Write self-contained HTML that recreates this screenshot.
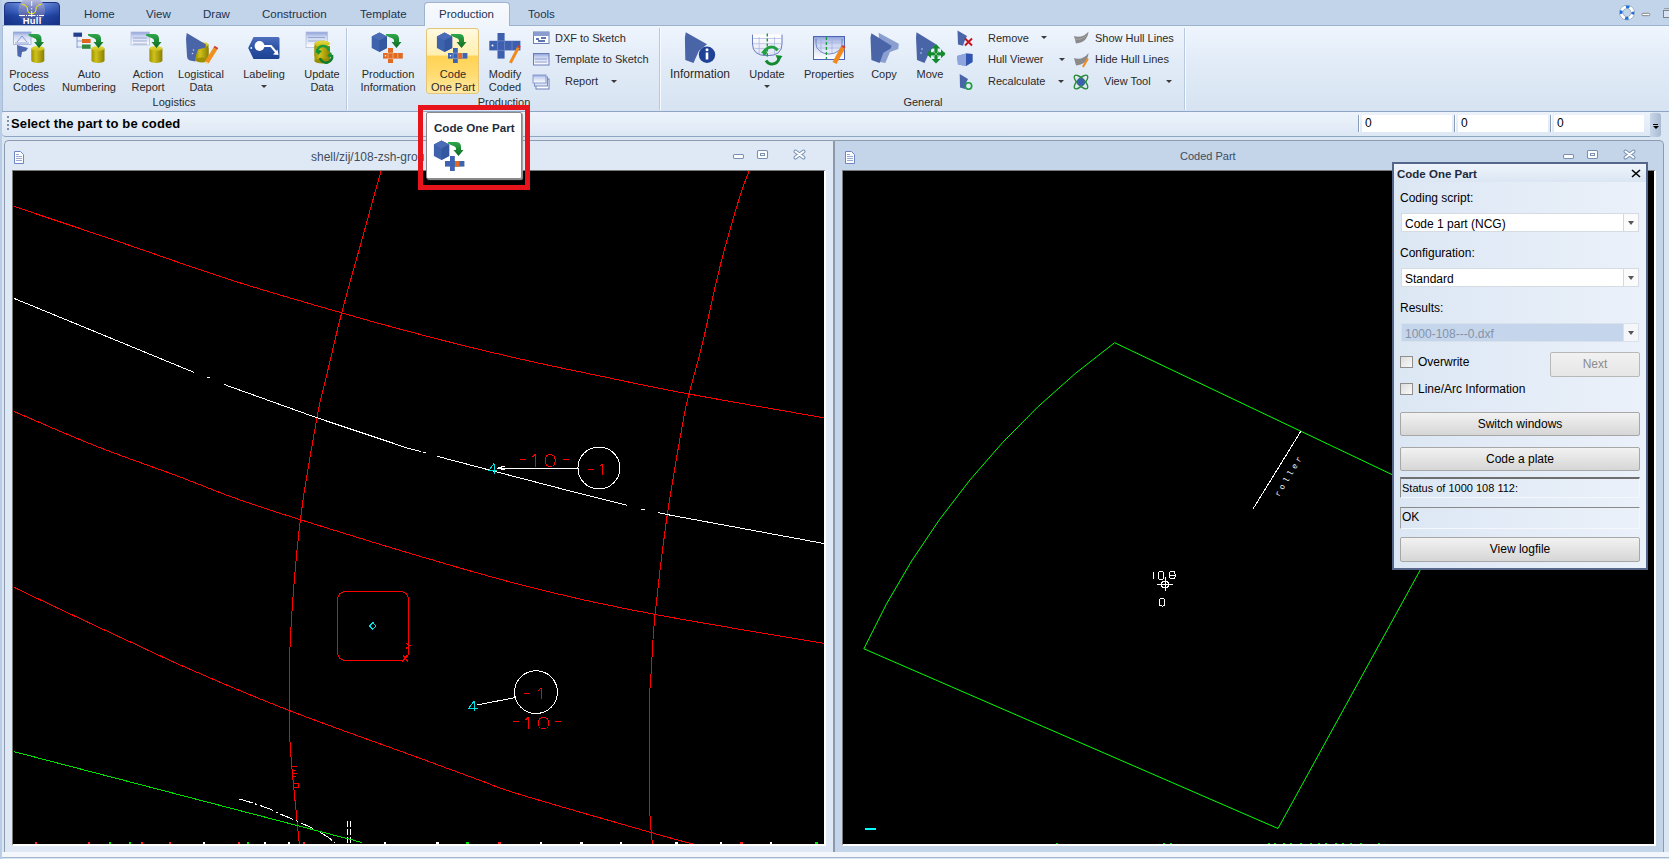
<!DOCTYPE html>
<html><head><meta charset="utf-8">
<style>
*{box-sizing:border-box;margin:0;padding:0}
html,body{width:1669px;height:859px;overflow:hidden}
body{position:relative;background:#c3d5eb;font-family:"Liberation Sans",sans-serif;font-size:11px;color:#1e395b}
.a{position:absolute}
.t{position:absolute;white-space:nowrap;line-height:13px}
#tabbar{left:0;top:0;width:1669px;height:26px;background:#c2d4ea}
.tab{position:absolute;top:8px;font-size:11.5px;color:#20334f;line-height:13px}
#ribbon{left:2px;top:25px;width:1667px;height:87px;border-top:1px solid #9cb2cd;border-left:1px solid #a9bcd6;border-bottom:1px solid #8ea6c3;background:linear-gradient(#eff5fd 0%,#e2ecf8 40%,#d7e3f2 100%)}
.lbl{position:absolute;font-size:11px;color:#2a2a2a;text-align:center;line-height:13px;white-space:nowrap}
.grp{position:absolute;top:96px;font-size:11px;color:#2a2a2a;line-height:13px;white-space:nowrap}
.sep{position:absolute;top:28px;width:2px;height:82px;border-left:1px solid #b9c9dd;border-right:1px solid #f7fafe}
.sm{position:absolute;font-size:11px;color:#2a2a2a;line-height:13px;white-space:nowrap}
.dd{position:absolute;width:0;height:0;border-left:3px solid transparent;border-right:3px solid transparent;border-top:3px solid #3a3a3a}
#cmd{left:2px;top:112px;width:1667px;height:25px;background:linear-gradient(#edf3fb,#dde8f5);border-bottom:1px solid #8ea6c3}
.fld{position:absolute;top:115px;height:17px;background:#fff;font-size:12px;color:#000;line-height:17px;padding-left:7px}
.win{position:absolute;top:140px;height:713px;border:1px solid #8c9bb0;border-bottom:none;border-radius:5px 5px 0 0}
.canvas{position:absolute;background:#000;border-top:1px solid #7a7a7a;border-left:1px solid #7a7a7a;border-right:2px solid #fff;border-bottom:2px solid #fff;overflow:hidden}
.wtitle{position:absolute;top:9px;font-size:11.5px;color:#3e4c60;white-space:nowrap}
.btn{position:absolute;height:24px;border:1px solid #a7a7a7;border-radius:2px;background:linear-gradient(#f2f2f2,#e4e4e4 50%,#d6d6d6);font-size:12px;color:#000;text-align:center;line-height:22px}
.dl{position:absolute;font-size:12px;color:#000;white-space:nowrap;line-height:14px}
.combo{position:absolute;height:19px;background:#fff;border:1px solid #d5dbe3;font-size:12px;color:#000;line-height:20px;padding-left:3px}
.combo .arr{position:absolute;right:0;top:0;width:15px;height:17px;border-left:1px solid #d8d8d8;background:#fbfbfb}
.combo .arr:after{content:"";position:absolute;left:4px;top:7px;border-left:3px solid transparent;border-right:3px solid transparent;border-top:4px solid #555}
.chk{position:absolute;width:13px;height:12px;border:1px solid #8f8f8f;background:linear-gradient(135deg,#dcdcdc,#fafafa)}
</style></head><body>

<!-- TAB BAR -->
<div id="tabbar" class="a"></div>
<div class="a" style="left:4px;top:2px;width:56px;height:24px;border-radius:4px 4px 0 0;background:linear-gradient(90deg,rgba(10,30,110,0.35),rgba(255,255,255,0) 30%,rgba(255,255,255,0) 70%,rgba(10,30,110,0.35)),linear-gradient(#6a8ee0,#3b62c4 40%,#2548a6 60%,#1b3a90);border:1px solid #1c3483"></div>
<svg class="a" style="left:4px;top:0" width="56" height="26" viewBox="4 0 56 26">
<defs><linearGradient id="hc" x1="0" x2="0" y1="0" y2="1"><stop offset="0" stop-color="#c8cbe4"/><stop offset="0.45" stop-color="#7480bd"/><stop offset="1" stop-color="#2c3f96"/></linearGradient></defs>
<circle cx="31.7" cy="10.5" r="13.3" fill="url(#hc)"/>
<path d="M22.3,4.3 L25,5.2 L27,7.2 L27.8,11 Q28.5,13.6 30.5,13.6 L33,13.6 Q35,13.6 35.6,11 L36.4,7.2 L38.4,5.2 L41,4.3" stroke="#f6f000" stroke-width="1" fill="none"/>
<path d="M31.7,1 v5 M31.7,8 v1.5 M31.7,11 v6" stroke="#fff" stroke-width="0.9"/>
<path d="M19,15.5 h6 M26,15.5 h1 M28,15.5 h7.5 M37,15.5 h1 M39,15.5 h5" stroke="#fff" stroke-width="1"/>
<text x="32.2" y="23.8" text-anchor="middle" font-family="Liberation Sans" font-weight="bold" font-size="9.4" fill="#fff" letter-spacing="0.3">Hull</text>
</svg>
<div class="t" style="left:84px" ></div>
<div class="tab" style="left:84px">Home</div>
<div class="tab" style="left:146px">View</div>
<div class="tab" style="left:203px">Draw</div>
<div class="tab" style="left:262px">Construction</div>
<div class="tab" style="left:360px">Template</div>
<div class="a" style="left:424px;top:2px;width:86px;height:25px;border:1px solid #9fb3cd;border-bottom:none;border-radius:4px 4px 0 0;background:linear-gradient(#f7fafe,#eff5fc)"></div>
<div class="tab" style="left:439px">Production</div>
<div class="tab" style="left:528px">Tools</div>

<svg class="a" style="left:1612px;top:0" width="57" height="26" viewBox="1612 0 57 26">
<circle cx="1627" cy="12.6" r="7.3" fill="none" stroke="#7a8a90" stroke-width="0.8"/>
<circle cx="1627" cy="12.6" r="4.3" fill="none" stroke="#7a8a90" stroke-width="0.8"/>
<circle cx="1627" cy="12.6" r="5.8" fill="none" stroke="#fff" stroke-width="2.8"/>
<circle cx="1627" cy="12.6" r="5.8" fill="none" stroke="#1f6fe0" stroke-width="2.8" stroke-dasharray="3.6,5.51" stroke-dashoffset="1.8"/>
<rect x="1642" y="13.3" width="7.8" height="2.4" rx="1" fill="#fff" stroke="#777" stroke-width="0.9"/>
<rect x="1663.5" y="10.5" width="8" height="7" fill="#d8e4f4" stroke="#777" stroke-width="0.9"/>
<path d="M1664,8.5 h6" stroke="#777" stroke-width="0.6"/>
</svg>
<!-- RIBBON -->
<div id="ribbon" class="a"></div>
<div class="a" style="left:425px;top:25px;width:84px;height:2px;background:#f0f5fc"></div>
<div class="sep" style="left:346px"></div>
<div class="sep" style="left:659px"></div>
<div class="sep" style="left:1184px"></div>

<!-- ribbon highlight for Code One Part -->
<div class="a" style="left:426px;top:28px;width:53px;height:66px;border:1px solid #e3c67b;border-radius:3px;background:linear-gradient(#fff9df 0%,#ffefb0 40%,#ffd354 43%,#ffdb6e 70%,#ffe9a6 100%)"></div>
<div class="lbl" style="left:-21px;top:68px;width:100px">Process<br>Codes</div>
<div class="lbl" style="left:39px;top:68px;width:100px">Auto<br>Numbering</div>
<div class="lbl" style="left:98px;top:68px;width:100px">Action<br>Report</div>
<div class="lbl" style="left:151px;top:68px;width:100px">Logistical<br>Data</div>
<div class="lbl" style="left:214px;top:68px;width:100px">Labeling</div>
<div class="dd" style="left:261px;top:85px"></div>
<div class="lbl" style="left:272px;top:68px;width:100px">Update<br>Data</div>
<div class="grp" style="left:124px;width:100px;text-align:center">Logistics</div>
<div class="lbl" style="left:338px;top:68px;width:100px">Production<br>Information</div>
<div class="lbl" style="left:403px;top:68px;width:100px">Code<br>One Part</div>
<div class="lbl" style="left:455px;top:68px;width:100px">Modify<br>Coded</div>
<div class="grp" style="left:454px;width:100px;text-align:center">Production</div>
<div class="sm" style="left:555px;top:32px">DXF to Sketch</div>
<div class="sm" style="left:555px;top:53px">Template to Sketch</div>
<div class="sm" style="left:565px;top:75px">Report</div>
<div class="dd" style="left:611px;top:80px"></div>
<div class="lbl" style="left:650px;top:68px;width:100px;font-size:12px">Information</div>
<div class="lbl" style="left:717px;top:68px;width:100px">Update</div>
<div class="dd" style="left:764px;top:85px"></div>
<div class="lbl" style="left:779px;top:68px;width:100px">Properties</div>
<div class="lbl" style="left:834px;top:68px;width:100px">Copy</div>
<div class="lbl" style="left:880px;top:68px;width:100px">Move</div>
<div class="grp" style="left:873px;width:100px;text-align:center">General</div>
<div class="sm" style="left:988px;top:32px">Remove</div>
<div class="dd" style="left:1041px;top:36px"></div>
<div class="sm" style="left:988px;top:53px">Hull Viewer</div>
<div class="dd" style="left:1059px;top:58px"></div>
<div class="sm" style="left:988px;top:75px">Recalculate</div>
<div class="dd" style="left:1058px;top:80px"></div>
<div class="sm" style="left:1095px;top:32px">Show Hull Lines</div>
<div class="sm" style="left:1095px;top:53px">Hide Hull Lines</div>
<div class="sm" style="left:1104px;top:75px">View Tool</div>
<div class="dd" style="left:1166px;top:80px"></div>


<svg class="a" style="left:0;top:26px" width="1669" height="85" viewBox="0 26 1669 85">
<defs>
<linearGradient id="cyl" x1="0" x2="1" y1="0" y2="0"><stop offset="0" stop-color="#9c9000"/><stop offset="0.35" stop-color="#cfc21c"/><stop offset="1" stop-color="#8a7f00"/></linearGradient>
<linearGradient id="cyltop" x1="0" x2="0" y1="0" y2="1"><stop offset="0" stop-color="#e4da40"/><stop offset="1" stop-color="#c8bb18"/></linearGradient>
<linearGradient id="grn" x1="0" x2="0" y1="0" y2="1"><stop offset="0" stop-color="#2ea84a"/><stop offset="1" stop-color="#0c6a22"/></linearGradient>
<linearGradient id="doc" x1="0" x2="0" y1="0" y2="1"><stop offset="0" stop-color="#8c9fd8"/><stop offset="0.3" stop-color="#c9d3f0"/><stop offset="1" stop-color="#ffffff"/></linearGradient>
<linearGradient id="plate" x1="0" x2="1" y1="0" y2="1"><stop offset="0" stop-color="#5a74b8"/><stop offset="1" stop-color="#3f5aa0"/></linearGradient>
<g id="arrowG"><path d="M0,0 L8,0 Q13,0 13,5 L13,8 L15.5,8 L10.5,14 L5.5,8 L8,8 L8,6.5 Q8,4.5 5.5,4 Q3,3.3 0,1.5 Z" fill="url(#grn)"/></g>
<g id="cylG"><path d="M0,3 L0,15 A6.5,2.5 0 0 0 13,15 L13,3 Z" fill="url(#cyl)"/><ellipse cx="6.5" cy="3" rx="6.5" ry="2.6" fill="url(#cyltop)"/></g>
</defs>
<!-- Process Codes -->
<rect x="13.5" y="32" width="17.5" height="12.5" fill="url(#doc)" stroke="#9aaad8" stroke-width="0.8"/>
<path d="M17,42 L22,36 L27,42 M15,43 h14" stroke="#6f86c8" fill="none" stroke-width="0.8"/>
<path d="M17,45 L28,48 L26,51 L22,52 L21,57.5 L17.5,56 Z" fill="#4c67ad"/>
<use href="#cylG" x="31.3" y="45.5"/>
<use href="#arrowG" x="28.5" y="34"/>
<!-- Auto Numbering -->
<rect x="73.4" y="32.6" width="8.6" height="4.2" fill="#233f8e"/>
<path d="M77,37 v11 M77,41 h5 M77,47 h5" stroke="#7b8fc8" fill="none" stroke-width="0.8"/>
<rect x="82" y="39" width="8.6" height="4" fill="#e0661e"/>
<rect x="82" y="44.5" width="8.6" height="4.3" fill="#2f8a3c"/>
<use href="#cylG" x="91.5" y="45.5"/>
<use href="#arrowG" x="88" y="34"/>
<!-- Action Report -->
<rect x="131" y="32" width="18.4" height="13" fill="url(#doc)" stroke="#b5c0e0" stroke-width="0.8"/>
<path d="M133,38 h14 M133,41 h14 M133,44 h14" stroke="#8899cc" stroke-width="0.8"/>
<use href="#cylG" x="149.4" y="45.5"/>
<use href="#arrowG" x="146" y="34"/>
<!-- Logistical Data -->
<use href="#cylG" x="195.5" y="41.5"/>
<rect x="195.5" y="48" width="13" height="12" fill="url(#cyl)"/>
<ellipse cx="202" cy="60" rx="6.5" ry="2.6" fill="#9a8f00"/>
<path d="M186.7,33 L206,44.6 L205.4,47.6 L198,49.5 L196,55 L195.5,61.6 L190,60.5 Q187,59.5 187,56 L186,39 Z" fill="#4a64a8"/>
<circle cx="193.5" cy="50" r="0.8" fill="#c8d2ee"/><circle cx="192.5" cy="53.5" r="0.8" fill="#c8d2ee"/>
<path d="M205,61 L213.5,47.5 L217.2,49.8 L208.7,63.3 Z" fill="#f0901e"/>
<path d="M213.5,47.5 L214.6,45.8 L218.3,48.1 L217.2,49.8Z" fill="#d04030"/>
<path d="M205,61 L208.7,63.3 L205.8,64.5Z" fill="#f2d6a0"/>
<!-- Labeling -->
<defs><linearGradient id="tag" x1="0" x2="0" y1="0" y2="1"><stop offset="0" stop-color="#4f6fbd"/><stop offset="0.5" stop-color="#2c52a6"/><stop offset="1" stop-color="#1d4193"/></linearGradient></defs>
<path d="M253.5,37 L278,37 Q279.5,37 279.5,38.5 L279.5,57.5 Q279.5,59 278,59 L253.5,59 L248.2,48 Z" fill="url(#tag)"/>
<circle cx="259.5" cy="46" r="4.9" fill="#fff"/>
<circle cx="251.3" cy="48" r="0.9" fill="#fff"/>
<path d="M264,46 L271,46 L276,52" stroke="#fff" stroke-width="2" fill="none"/>
<path d="M273,54.5 L278.5,55 L277.5,49.5 Z" fill="#fff"/>
<!-- Update Data -->
<rect x="306" y="32" width="21.5" height="15.6" fill="url(#doc)" stroke="#b5c0e0" stroke-width="0.8"/>
<path d="M308,37.5 h17 M308,41 h17" stroke="#8899cc" stroke-width="0.8"/>
<use href="#cylG" x="314.5" y="40.6" transform="translate(0,0)"/>
<rect x="314.5" y="46" width="15.5" height="15" fill="url(#cyl)"/>
<ellipse cx="322.2" cy="61" rx="7.7" ry="2.5" fill="#9a8f00"/>
<ellipse cx="322.3" cy="43.6" rx="7.7" ry="3" fill="url(#cyltop)"/>
<path d="M317,53 A6,6 0 0 1 329,51" stroke="#1d9a3a" stroke-width="2.5" fill="none"/>
<path d="M332,55 A6,6 0 0 1 320,58" stroke="#0f7a2a" stroke-width="2.5" fill="none"/>
<path d="M316,49 l2,6 l4,-4 z M333,58 l-2,-6 l-4,4z" fill="#159030"/>
<!-- Production Information -->
<path d="M379.4,32.6 L387,36.5 L387,48 L379.4,52 L371.7,48 L371.7,36.5 Z" fill="#3f62ad"/>
<path d="M379.4,32.6 L387,36.5 L379.4,40.5 L371.7,36.5 Z" fill="#4a6bb5"/>
<path d="M379.4,40.5 L387,36.5 L387,48 L379.4,52 Z" fill="#3357a0"/>
<use href="#arrowG" x="386" y="34"/>
<g fill="#e06a22"><rect x="388" y="48" width="5" height="15"/><rect x="383" y="53" width="19.8" height="5.6"/></g>
<path d="M388,53 v5.6 M393,53 v5.6 M397.8,53 v5.6 M388,53 h5 M388,58.6 h5" stroke="#f7c3a0" stroke-width="0.6"/><circle cx="385.5" cy="55.8" r="0.8" fill="#fff"/>
<!-- Code One Part -->
<path d="M444.5,32.6 L452.2,36.5 L452.2,48 L444.5,52 L436.9,48 L436.9,36.5 Z" fill="#3f62ad"/>
<path d="M444.5,32.6 L452.2,36.5 L444.5,40.5 L436.9,36.5 Z" fill="#4a6bb5"/>
<path d="M444.5,40.5 L452.2,36.5 L452.2,48 L444.5,52 Z" fill="#3357a0"/>
<use href="#arrowG" x="451" y="34"/>
<g fill="#3e63b0"><rect x="453" y="48" width="4.8" height="15"/><rect x="448" y="53" width="19.4" height="5.6"/></g>
<rect x="458" y="53" width="4.5" height="5.6" fill="#e06a22"/>
<path d="M453,53 v5.6 M457.8,53 v5.6 M462.5,53 v5.6 M453,53 h4.8 M453,58.6 h4.8" stroke="#9fb4e0" stroke-width="0.6"/><circle cx="450.5" cy="55.8" r="0.8" fill="#fff"/>
<!-- Modify Coded -->
<g fill="#3e5fae"><rect x="497.5" y="33" width="7.1" height="25.6"/><rect x="489.3" y="40.8" width="31.1" height="9.6"/></g>
<path d="M497.5,40.8 v9.6 M504.6,40.8 v9.6 M512,40.8 v9.6 M497.5,50.4 h7.1 M497.5,40.8 h7.1" stroke="#7f99d0" stroke-width="0.6"/>
<circle cx="492.5" cy="45.5" r="1" fill="#fff"/>
<path d="M509,62.2 L517,47 L519.7,48.3 L511.7,63.5 Z" fill="#f08a1c"/>
<path d="M517,47 L518,45 L520.7,46.3 L519.7,48.3Z" fill="#d0402a"/>
<!-- DXF to Sketch small -->
<rect x="533.5" y="32" width="15.5" height="11.5" fill="#fff" stroke="#6a7fb8" stroke-width="1"/>
<rect x="533.5" y="32" width="15.5" height="4" fill="#8b9cd0"/>
<path d="M536,39 h3 M541,38 h5 M538,41 h7" stroke="#2a4a9a" stroke-width="1.3"/>
<rect x="533.5" y="53.5" width="15.5" height="11.5" fill="url(#doc)" stroke="#6a7fb8" stroke-width="1"/>
<path d="M535,59 h12 M535,62 h12" stroke="#7a8fc8" stroke-width="0.8"/>
<rect x="536" y="79" width="13" height="10" fill="#fff" stroke="#6a7fb8" stroke-width="1"/>
<rect x="534.5" y="77" width="13" height="9" fill="#dde3f3" stroke="#7a8fc8" stroke-width="1"/>
<rect x="533" y="75" width="13" height="8" fill="url(#doc)" stroke="#8a9cd0" stroke-width="1"/>
<!-- Information -->
<path d="M685.8,32.2 L707,44.2 L698.8,51 L693.5,62.9 L685.3,60 L684.9,37.5 Z" fill="#4a64a8"/>
<circle cx="707" cy="54.8" r="8.2" fill="#1f4196"/>
<rect x="705.7" y="52.5" width="2.6" height="7" fill="#fff"/><circle cx="707" cy="49.8" r="1.5" fill="#fff"/>
<!-- Update (General) -->
<defs><linearGradient id="ug" x1="0" x2="0" y1="0" y2="1"><stop offset="0" stop-color="#ffffff"/><stop offset="1" stop-color="#dfe4f6"/></linearGradient></defs>
<path d="M752.5,34.6 L752.5,44 Q752.5,55.7 767.3,55.7 Q782,55.7 782,44 L782,34.6" fill="url(#ug)" stroke="#5a6cb4" stroke-width="0.9"/>
<path d="M752.8,38.5 h29 M753,43.7 h28.6 M754.5,48.5 h25.5 M759.2,37 v17 M774.5,37 v17" stroke="#a9b5e0" stroke-width="0.7" fill="none"/>
<path d="M767.3,33.5 v23" stroke="#1a9a3a" stroke-width="1.4" stroke-dasharray="3,2"/>
<path d="M764.5,55 A7,7 0 0 1 777.5,50.5" stroke="#22a040" stroke-width="3" fill="none"/>
<path d="M779,56 A7,7 0 0 1 766,60.5" stroke="#138a30" stroke-width="3" fill="none"/>
<path d="M761,53 L764.5,48.5 L768,54 Z" fill="#22a040"/>
<path d="M782.5,56 L778.5,61.5 L775.5,55 Z" fill="#138a30"/>
<!-- Properties -->
<rect x="813.5" y="36.5" width="31" height="23" fill="url(#doc)" stroke="#4a64b8" stroke-width="1"/>
<path d="M816,39 L816,44 A13,10 0 0 0 842,44 L842,39" fill="none" stroke="#5c72b8" stroke-width="0.8"/>
<path d="M816,43 h26 M816,48 h26 M821,40 v13 M832,40 v13" stroke="#9aaade" stroke-width="0.6"/>
<path d="M826.4,37 v22" stroke="#1a9a3a" stroke-width="1.3" stroke-dasharray="3,2"/>
<path d="M832.5,62 L841,46.5 L845,48.8 L836.5,64 Z" fill="#f08a1c"/>
<path d="M841.5,47 L842.7,45 L845.5,46.6 L844.5,48.6Z" fill="#d0402a"/>
<!-- Copy -->
<path d="M878.6,32.7 L898.8,43.7 L898.3,49 L890,51.9 L885.3,62.9 L880,62 L879,38 Z" fill="#8a9fd0"/>
<path d="M871.4,33.2 L891.6,45.7 L890.6,48.5 L883.4,52.8 L879.6,62.9 L871.4,60 L870.5,37.5 Z" fill="#4a64a8"/>
<!-- Move -->
<path d="M916.5,32.2 L936,44.2 L930,51 L924.5,62.9 L917,60 L916,37.5 Z" fill="#4a64a8"/>
<circle cx="922" cy="49" r="0.8" fill="#c8d2ee"/><circle cx="921" cy="53" r="0.8" fill="#c8d2ee"/>
<path d="M936,45.5 v16.5 M928,53.8 h16.5" stroke="#148a2e" stroke-width="3.2"/>
<path d="M936,44 l4.5,4.5 h-9 z M936,63.5 l4.5,-4.5 h-9 z M926.5,53.8 l4.5,-4.5 v9 z M945.5,53.8 l-4.5,-4.5 v9 z" fill="#148a2e"/>
<path d="M933,51 l6,6 M939,51 l-6,6" stroke="#7fd090" stroke-width="0.8"/>
<!-- Remove small -->
<path d="M957.5,30.5 L967,36 L965,40 L963,45.7 L958,44.5 Z" fill="#4a64a8"/>
<path d="M965,38.5 L972,45.5 M972,38.5 L965,45.5" stroke="#c8141e" stroke-width="2"/>
<!-- Hull Viewer small -->
<path d="M957,56 L966,53.5 L972.5,54 L972.5,62 L966,66 L958,64.5 Z" fill="#6f8ad0"/>
<path d="M966,53.5 L972.5,54 L972.5,62 L966,66 Z" fill="#2f55b0"/>
<path d="M957,56 L966,53.5 L966,66 L958,64.5Z" fill="#8ea4dc"/>
<!-- Recalculate small -->
<path d="M959.7,74 L968,79 L966,83 L965,89 L960,87.5 Z" fill="#4a64a8"/>
<circle cx="968.5" cy="86" r="3.2" stroke="#1a9a3a" stroke-width="1.6" fill="none"/>
<!-- Show Hull Lines -->
<path d="M1074,36 C1079,38 1085,36 1088.5,31.5 C1088,38 1084,43 1076,43.5 Z" fill="#8a8a8a"/>
<path d="M1075,39 C1080,40 1083,38 1086,36" stroke="#b4b4b4" stroke-width="0.7" fill="none"/>
<!-- Hide Hull Lines -->
<path d="M1074,58 C1079,60 1085,58 1088.5,53 C1088,60 1084,65 1076,65.5 Z" fill="#8a8a8a"/>
<path d="M1082,66.5 L1087,58 L1088.8,59 L1083.8,67.5 Z" fill="#f08a1c"/>
<!-- View Tool -->
<ellipse cx="1081" cy="82" rx="9" ry="3.5" transform="rotate(45 1081 82)" stroke="#2a8a3a" stroke-width="1.4" fill="none"/>
<ellipse cx="1081" cy="82" rx="9" ry="3.5" transform="rotate(-45 1081 82)" stroke="#2a8a3a" stroke-width="1.4" fill="none"/>
<circle cx="1081" cy="82" r="3.8" fill="#3a5fae"/>
</svg>
<!-- COMMAND BAR -->
<div class="a" style="left:0;top:112px;width:1669px;height:747px;background:#dbe6f3"></div>
<div class="a" style="left:0;top:0;width:2px;height:859px;background:#b9cde6"></div>
<div id="cmd" class="a" style="border-radius:4px 0 0 4px;width:1650px"></div>
<div class="a" style="left:7px;top:116px;width:2px;height:14px;background:repeating-linear-gradient(#7b8fb0 0 2px,transparent 2px 4px)"></div>
<div class="a" style="left:11px;top:117px;font-size:13px;letter-spacing:0.12px;font-weight:bold;color:#000;line-height:14px;white-space:nowrap">Select the part to be coded</div>
<div class="a" style="left:1358px;top:115px;width:2px;height:17px;border-left:1px solid #8a9cb6;border-right:1px solid #fff"></div>
<div class="a" style="left:1454px;top:115px;width:2px;height:17px;border-left:1px solid #8a9cb6;border-right:1px solid #fff"></div>
<div class="a" style="left:1550px;top:115px;width:2px;height:17px;border-left:1px solid #8a9cb6;border-right:1px solid #fff"></div>
<div class="fld" style="left:1362px;width:90px;padding-left:3px">0</div>
<div class="fld" style="left:1458px;width:90px;padding-left:3px">0</div>
<div class="fld" style="left:1554px;width:90px;padding-left:3px">0</div>
<div class="a" style="left:1650px;top:113px;width:11px;height:24px;border-radius:0 3px 3px 0;background:linear-gradient(90deg,#c9d6e8,#a9bad2)"></div>
<div class="a" style="left:1653px;top:124px;width:5px;height:1px;background:#000"></div>
<div class="dd" style="left:1652.5px;top:126px;border-top-color:#000;border-left-width:3px;border-right-width:3px;border-top-width:3px"></div>
<!-- LEFT WINDOW -->
<div class="win" style="left:4px;width:831px;background:#dfe9f5;border-radius:5px 0 0 0;border-right:2px solid #8d99aa"></div>
<div class="wtitle" style="left:311px;top:150px;font-size:12px">shell/zij/108-zsh-grou</div>
<svg class="a" style="left:731px;top:148px" width="77" height="14" viewBox="731 148 77 14">
<rect x="733.5" y="154.5" width="10" height="4" rx="1.2" fill="#fff" stroke="#7890b2" stroke-width="1.1"/>
<rect x="757.5" y="150.5" width="10" height="8" rx="1.2" fill="#fff" stroke="#7890b2" stroke-width="1.1"/>
<rect x="760.5" y="153.5" width="4" height="2" fill="#fff" stroke="#7890b2" stroke-width="1"/>
<path d="M795.5,151.5 L803.5,157.5 M803.5,151.5 L795.5,157.5" stroke="#7890b2" stroke-width="4" stroke-linecap="round"/>
<path d="M795.5,151.5 L803.5,157.5 M803.5,151.5 L795.5,157.5" stroke="#fff" stroke-width="2" stroke-linecap="round"/>
</svg><svg class="a" style="left:14px;top:151px" width="11" height="13" viewBox="0 0 11 13">
<path d="M0.5,0.5 H6.5 L9.5,3.5 V12.5 H0.5 Z" fill="#fbfdff" stroke="#6f86c0" stroke-width="1"/>
<path d="M2,3.5 h3 M2,5.5 h6 M2,7.5 h6 M2,9.5 h6" stroke="#8ea0cc" stroke-width="0.9"/>
</svg>
<div class="canvas" style="left:12px;top:170px;width:814px;height:676px"></div>
<svg class="a" style="left:13px;top:171px" width="811" height="673" viewBox="13 171 811 673" shape-rendering="crispEdges">
<g fill="none" stroke="#ff0000" stroke-width="1">
<polyline points="13.8,206.3 22.3,209.2 33.6,213.0 47.0,217.5 62.0,222.5 77.8,227.8 93.7,233.2 109.2,238.5 123.5,243.3 136.9,247.9 150.2,252.5 163.4,257.1 176.6,261.7 189.8,266.3 203.1,270.8 216.5,275.3 230.0,279.7 243.9,284.1 258.3,288.5 273.0,292.9 287.6,297.2 302.0,301.4 316.0,305.5 329.3,309.3 341.7,312.9 353.0,316.1 363.4,319.1 373.1,321.8 382.4,324.4 391.5,326.8 400.6,329.3 410.0,331.8 420.0,334.4 430.5,337.1 441.1,339.9 451.9,342.6 462.9,345.4 473.9,348.1 485.0,350.8 496.0,353.4 507.0,356.0 517.9,358.5 528.8,360.9 539.7,363.3 550.6,365.7 561.5,368.0 572.6,370.3 583.7,372.6 595.0,375.0 606.2,377.3 617.1,379.6 628.0,381.9 639.0,384.2 650.4,386.5 662.4,388.9 675.2,391.4 689.0,394.0 704.9,396.9 723.2,400.2 742.9,403.7 762.9,407.2 782.1,410.5 799.6,413.6 814.2,416.1 825.0,418.0"/>
<polyline points="749.0,171.0 748.3,172.8 747.5,175.0 746.5,177.5 745.4,180.5 744.2,183.9 742.8,187.6 741.4,191.7 740.0,196.2 738.4,201.2 736.7,206.9 734.8,213.1 732.9,219.6 731.0,226.2 729.1,232.9 727.2,239.4 725.5,245.6 723.9,251.5 722.4,257.3 720.9,263.0 719.5,268.7 718.1,274.4 716.7,280.2 715.3,286.1 713.9,292.2 712.5,298.5 711.0,305.0 709.6,311.6 708.2,318.2 706.7,324.9 705.2,331.6 703.7,338.2 702.2,344.6 700.6,351.1 698.8,357.7 697.0,364.4 695.2,371.0 693.5,377.3 691.8,383.4 690.3,389.0 689.0,394.0 688.0,397.9 687.3,400.5 686.8,402.4 686.3,404.2 685.9,406.3 685.3,409.2 684.5,413.6 683.3,420.0 681.8,428.5 679.9,438.7 677.9,450.2 675.7,462.7 673.5,475.7 671.3,489.0 669.2,502.1 667.3,514.6 665.5,527.1 663.8,540.2 662.1,553.6 660.4,566.9 658.9,580.0 657.5,592.4 656.2,604.0 655.1,614.4 654.2,623.7 653.5,632.1 653.0,639.8 652.5,646.8 652.2,653.2 651.9,659.2 651.6,664.7 651.3,670.0 651.0,674.5 650.7,677.8 650.5,680.4 650.3,682.8 650.1,685.1 650.0,688.0 649.8,691.6 649.7,696.5 649.6,702.8 649.5,710.3 649.5,718.6 649.5,727.3 649.4,736.2 649.4,744.8 649.4,752.9 649.4,760.0 649.4,766.3 649.4,772.3 649.3,777.9 649.3,783.1 649.3,788.1 649.3,792.7 649.3,797.1 649.4,801.3 649.5,805.2 649.6,808.6 649.7,811.8 649.9,814.7 650.1,817.4 650.2,820.1 650.4,822.7 650.6,825.3 650.8,828.0 651.1,830.8 651.3,833.5 651.6,836.1 651.8,838.6 652.1,840.8 652.3,842.6 652.4,844.0"/>
<polyline points="381.0,171.0 379.8,175.4 378.2,181.0 376.3,187.8 374.2,195.3 371.9,203.5 369.5,212.2 367.1,221.1 364.6,230.0 362.0,239.3 359.2,249.4 356.2,260.0 353.1,270.9 350.1,281.9 347.1,292.7 344.3,303.1 341.7,312.9 339.3,322.2 337.0,331.5 334.8,340.5 332.8,349.3 330.8,357.7 328.9,365.7 327.2,373.1 325.6,380.0 324.2,385.7 323.1,390.0 322.2,393.5 321.3,396.7 320.5,400.2 319.5,404.5 318.4,410.2 317.0,417.8 315.3,427.4 313.2,438.6 311.1,450.9 308.8,464.2 306.5,478.1 304.2,492.1 302.2,506.1 300.4,519.7 298.8,533.3 297.3,547.4 295.9,561.8 294.6,576.2 293.5,590.4 292.5,604.3 291.6,617.6 290.8,630.0 290.2,641.7 289.8,653.1 289.6,664.0 289.5,674.4 289.4,684.3 289.4,693.7 289.5,702.4 289.5,710.6 289.5,717.6 289.5,723.3 289.5,728.1 289.6,732.4 289.7,736.9 290.0,741.9 290.4,747.9 290.9,755.3 291.7,764.9 292.7,776.5 293.9,789.2 295.2,802.4 296.5,815.3 297.6,827.0 298.6,836.9 299.3,844.0"/>
<polyline points="13.8,411.4 20.0,414.1 28.2,417.6 38.0,421.8 48.9,426.5 60.5,431.5 72.2,436.4 83.7,441.2 94.4,445.5 104.8,449.5 115.6,453.6 126.5,457.6 137.3,461.5 148.0,465.4 158.4,469.1 168.2,472.6 177.3,476.0 185.6,479.1 193.1,482.1 200.1,484.8 206.7,487.4 213.2,490.0 219.8,492.5 226.6,495.1 234.0,497.8 241.5,500.4 248.7,502.9 255.9,505.4 263.3,507.8 271.2,510.4 279.8,513.2 289.5,516.3 300.4,519.7 312.8,523.6 326.6,527.9 341.5,532.5 357.1,537.3 373.0,542.2 389.1,547.1 404.8,551.8 420.0,556.3 434.7,560.6 449.3,564.9 463.8,569.1 478.3,573.2 492.7,577.2 507.2,581.2 521.8,585.0 536.4,588.7 550.8,592.2 564.7,595.5 578.5,598.7 592.4,601.8 606.7,604.8 621.8,607.9 637.8,611.1 655.1,614.4 675.0,618.1 698.0,622.1 722.5,626.3 747.5,630.6 771.5,634.6 793.3,638.2 811.5,641.2 825.0,643.5"/>
<polyline points="13.8,587.2 17.4,588.9 22.1,591.2 27.7,593.9 34.0,596.9 40.7,600.1 47.7,603.4 54.8,606.7 61.7,610.0 68.6,613.2 75.6,616.5 82.9,619.9 90.4,623.4 98.0,627.0 105.8,630.6 113.7,634.3 121.8,638.0 129.9,641.7 137.9,645.5 146.1,649.3 154.4,653.2 163.0,657.2 172.0,661.3 181.6,665.6 191.7,670.0 202.4,674.6 213.4,679.4 224.9,684.3 236.8,689.3 249.2,694.5 262.1,699.7 275.5,705.1 289.5,710.6 304.7,716.4 321.5,722.6 339.1,729.1 357.1,735.6 374.8,742.0 391.6,748.0 406.8,753.5 420.0,758.3 431.0,762.3 440.4,765.8 448.5,768.8 455.7,771.4 462.1,773.8 468.1,776.0 473.9,778.1 480.0,780.3 485.3,782.3 489.3,783.8 492.5,785.2 495.6,786.4 499.2,787.8 504.1,789.5 510.8,791.6 520.0,794.5 532.6,798.3 548.4,802.9 566.4,808.2 585.4,813.7 604.4,819.1 622.4,824.3 638.3,828.9 651.0,832.5 660.8,835.3 668.7,837.5 675.0,839.3 680.0,840.6 684.0,841.7 687.2,842.6 690.0,843.3 692.6,844.0"/>
<rect x="337.5" y="591.5" width="71" height="69" rx="8" ry="8"/>
<path d="M406,643.5 l4,2 l-4,3 M403,655 l5,7 M407,655 l-5,7"/>
<path d="M291.5,766.5 h5 M292,770 h4 M292.5,773 h4 M292.5,776.5 h3.5 M293.5,783 h5 v4 h-5"/>
</g>
<g fill="none" stroke="#ffffff" stroke-width="1">
<polyline points="13.8,298.3 65,319.3 193.8,372.3"/>
<path d="M207,377.5 h3"/>
<polyline points="223.9,384.4 317,417.8 408.6,448.4 421,451.4"/>
<path d="M423,452 h3"/>
<polyline points="437.5,456.4 492.7,470.9 565.5,489.8 626.6,505.2"/>
<path d="M641,509 l4,1"/>
<polyline points="658,512.5 667.3,514.6 825,543.7"/>
<path d="M497,468 L578.6,468 M498,468 l7,-2 M498,468 l7,2"/>
<circle cx="598.9" cy="468" r="21"/>
<path d="M476.5,705.1 L514.6,697.7"/>
<circle cx="536" cy="692.1" r="21.4"/>
<polyline points="239,799 248,801.5 260,805.5 270,809 280,814 290,818 300,822.5 310,827 320,832.5 328,837 335,843" stroke-dasharray="14,3,2,3"/>
<path d="M347,821 v22 M350.5,821 v22" stroke-dasharray="6,2"/>
</g>
<g fill="none" stroke="#00e0e0" stroke-width="1">
<path d="M372.8,622.5 l3.3,3.4 l-3.3,3.4 l-3.3,-3.4 z"/>
<path d="M494,463.6 l-5.5,7 h8.5 M494,463.6 v10"/>
<path d="M474,701.4 l-5.5,7 h9 M474,701.4 v10"/>
</g>
<polyline fill="none" stroke="#00e000" stroke-width="1" points="14.2,751.7 362.2,842.5"/>
<g stroke="#ff0000" fill="none" stroke-width="1">
<path d="M520.4,459.8 h6 M535,454.3 v12.3 l0,0 M535,454.5 l-2.5,2.5 M562.6,459.8 h6"/>
<rect x="545.5" y="454.8" width="9.5" height="11.5" rx="4" ry="4"/>
<path d="M588,469.8 h6 M602,463.6 v11.7 M602,463.8 l-2.5,2.5"/>
<path d="M524.4,693.8 h6 M541,688 v11 M541,688.2 l-2.5,2.5"/>
<path d="M513.4,721.3 h6 M528,717.4 v11.1 M528,717.6 l-2.5,2.5 M555,721.3 h6"/>
<rect x="538.5" y="717.8" width="10" height="10.7" rx="4" ry="4"/>
</g>
<g fill="#ff2020"><rect x="35" y="842" width="2" height="2"/><rect x="88" y="842" width="2" height="2"/><rect x="141" y="842" width="2" height="2"/><rect x="169" y="842" width="2" height="2"/><rect x="238" y="842" width="2" height="2"/><rect x="303" y="842" width="2" height="2"/><rect x="498" y="842" width="3" height="2"/><rect x="740" y="842" width="3" height="2"/></g>
<g fill="#00e000"><rect x="109" y="842" width="2" height="2"/><rect x="129" y="842" width="2" height="2"/><rect x="247" y="842" width="2" height="2"/><rect x="466" y="842" width="3" height="2"/><rect x="815" y="842" width="3" height="2"/></g>
<g fill="#ffffff"><rect x="203" y="842" width="2" height="2"/><rect x="264" y="842" width="2" height="2"/><rect x="288" y="842" width="2" height="2"/><rect x="384" y="842" width="2" height="2"/><rect x="436" y="842" width="3" height="2"/><rect x="540" y="842" width="2" height="2"/><rect x="580" y="842" width="3" height="2"/><rect x="620" y="842" width="2" height="2"/><rect x="675" y="842" width="3" height="2"/><rect x="720" y="842" width="2" height="2"/><rect x="770" y="842" width="2" height="2"/></g>
</svg>

<!-- RIGHT WINDOW -->
<div class="win" style="left:835px;width:829px;background:#c4d5ea;border-left:none;border-radius:0 5px 0 0"></div>
<div class="wtitle" style="left:1180px;top:150px;font-size:11px">Coded Part</div>
<svg class="a" style="left:1561px;top:148px" width="77" height="14" viewBox="1561 148 77 14">
<rect x="1563.5" y="154.5" width="10" height="4" rx="1.2" fill="#fff" stroke="#7890b2" stroke-width="1.1"/>
<rect x="1587.5" y="150.5" width="10" height="8" rx="1.2" fill="#fff" stroke="#7890b2" stroke-width="1.1"/>
<rect x="1590.5" y="153.5" width="4" height="2" fill="#fff" stroke="#7890b2" stroke-width="1"/>
<path d="M1625.5,151.5 L1633.5,157.5 M1633.5,151.5 L1625.5,157.5" stroke="#7890b2" stroke-width="4" stroke-linecap="round"/>
<path d="M1625.5,151.5 L1633.5,157.5 M1633.5,151.5 L1625.5,157.5" stroke="#fff" stroke-width="2" stroke-linecap="round"/>
</svg><svg class="a" style="left:845px;top:151px" width="11" height="13" viewBox="0 0 11 13">
<path d="M0.5,0.5 H6.5 L9.5,3.5 V12.5 H0.5 Z" fill="#fbfdff" stroke="#6f86c0" stroke-width="1"/>
<path d="M2,3.5 h3 M2,5.5 h6 M2,7.5 h6 M2,9.5 h6" stroke="#8ea0cc" stroke-width="0.9"/>
</svg>
<div class="canvas" style="left:842px;top:170px;width:814px;height:676px"></div>
<svg class="a" style="left:843px;top:171px" width="811" height="673" viewBox="843 171 811 673" shape-rendering="crispEdges">
<g fill="none" stroke="#00ff00" stroke-width="1">
<path d="M863.9,648.8 A797,797 0 0 1 1114.6,342.7 L1456,505 L1278,828.5 Z" shape-rendering="auto"/>
</g>
<g fill="none" stroke="#ffffff" stroke-width="1">
<path d="M1301,431 L1253,509"/>
<path d="M1157,584.5 h16 M1165,577 v14"/>
<circle cx="1165" cy="584.5" r="3.5"/>
<path d="M1153.5,571.5 v7"/>
<rect x="1158.5" y="571.5" width="5" height="8" rx="2"/>
<rect x="1169.5" y="571.5" width="5.5" height="7" rx="2"/>
<path d="M1169.5,575 h5.5"/>
<rect x="1159.5" y="598.5" width="5" height="7.5" rx="2"/>

</g>
<path d="M865,828.5 h11" stroke="#00ffff" stroke-width="2"/>
<rect x="1056" y="842.5" width="1.5" height="1.5" fill="#00e000"/><rect x="1163" y="842.5" width="1.5" height="1.5" fill="#00e000"/><rect x="1170" y="842.5" width="1.5" height="1.5" fill="#00e000"/><rect x="1268" y="842.5" width="1.5" height="1.5" fill="#00e000"/><rect x="1274" y="842.5" width="1.5" height="1.5" fill="#00e000"/><rect x="1283" y="842.5" width="1.5" height="1.5" fill="#00e000"/><rect x="1290" y="842.5" width="1.5" height="1.5" fill="#00e000"/><rect x="1300" y="842.5" width="1.5" height="1.5" fill="#00e000"/><rect x="1310" y="842.5" width="1.5" height="1.5" fill="#00e000"/><rect x="1318" y="842.5" width="1.5" height="1.5" fill="#00e000"/><rect x="1325" y="842.5" width="1.5" height="1.5" fill="#00e000"/><rect x="1335" y="842.5" width="1.5" height="1.5" fill="#00e000"/><rect x="1342" y="842.5" width="1.5" height="1.5" fill="#00e000"/><rect x="1350" y="842.5" width="1.5" height="1.5" fill="#00e000"/><rect x="1360" y="842.5" width="1.5" height="1.5" fill="#00e000"/><rect x="1378" y="842.5" width="1.5" height="1.5" fill="#00e000"/>
<text x="0" y="0" transform="translate(1279,497) rotate(-59)" font-family="Liberation Mono" font-size="8" fill="#fff" letter-spacing="3.2">roller</text>
</svg>

<div class="a" style="left:2px;top:852px;width:1667px;height:6px;background:#f3f7fc;border-bottom:1px solid #a3b6cf"></div>
<!-- DIALOG -->
<div class="a" style="left:1392px;top:162px;width:256px;height:408px;border:2px solid #56668a;border-top-width:2px;background:linear-gradient(90deg,#dce7f4,#ebf1fa)"></div>
<div class="a" style="left:1394px;top:164px;width:252px;height:18px;background:linear-gradient(#eef4fb,#dbe6f3)"></div>
<div class="dl" style="left:1397px;top:167px;font-weight:bold;font-size:11.5px;color:#1e2a3a">Code One Part</div>
<svg class="a" style="left:1631px;top:169px" width="10" height="9"><path d="M1,1 L9,8 M9,1 L1,8" stroke="#000" stroke-width="1.6"/></svg>
<div class="dl" style="left:1400px;top:191px">Coding script:</div>
<div class="combo" style="left:1401px;top:213px;width:238px">Code 1 part (NCG)<div class="arr"></div></div>
<div class="dl" style="left:1400px;top:246px">Configuration:</div>
<div class="combo" style="left:1401px;top:268px;width:238px">Standard<div class="arr"></div></div>
<div class="dl" style="left:1400px;top:301px">Results:</div>
<div class="combo" style="left:1401px;top:323px;width:238px;background:#c4d5ec;color:#8593a6;border-color:#d9e1ea">1000-108---0.dxf<div class="arr" style="background:#f4f6f9;border-left-color:#e0e0e0"></div></div>
<div class="chk" style="left:1400px;top:356px"></div>
<div class="dl" style="left:1418px;top:355px">Overwrite</div>
<div class="btn" style="left:1550px;top:352px;width:90px;height:25px;color:#8b8b8b;border-color:#b8b8b8;background:linear-gradient(#f1f1f1,#e6e6e6);line-height:23px">Next</div>
<div class="chk" style="left:1400px;top:383px"></div>
<div class="dl" style="left:1418px;top:382px">Line/Arc Information</div>
<div class="btn" style="left:1400px;top:412px;width:240px">Switch windows</div>
<div class="btn" style="left:1400px;top:447px;width:240px">Code a plate</div>
<div class="a" style="left:1400px;top:477px;width:240px;height:21px;border-top:2px solid #6f6f6f;border-left:1px solid #8a8a8a;border-right:1px solid #f4f7fb;border-bottom:1px solid #f4f7fb;font-size:11px;line-height:18px;color:#000;padding-left:1px;white-space:nowrap">Status of 1000 108 112:</div>
<div class="a" style="left:1400px;top:507px;width:240px;height:22px;border-top:1px solid #8a8a8a;border-left:1px solid #a0a0a0;border-right:1px solid #f4f7fb;border-bottom:1px solid #f4f7fb;font-size:12px;line-height:19px;color:#000;padding-left:1px">OK</div>
<div class="btn" style="left:1400px;top:537px;width:240px;height:25px">View logfile</div>

<!-- TOOLTIP -->
<div class="a" style="left:418px;top:105px;width:112px;height:85px;border:5px solid #e8141c"></div>
<div class="a" style="left:426px;top:112px;width:96px;height:67px;background:#fff;border:1px solid #8a8a8a;border-radius:2px;box-shadow:1px 1px 1px #999"></div>
<div class="a" style="left:434px;top:121px;font-size:11.6px;font-weight:bold;color:#1f2b3d;white-space:nowrap">Code One Part</div>
<svg class="a" style="left:430px;top:138px" width="40" height="36" viewBox="430 138 40 36">
<defs><linearGradient id="grn2" x1="0" x2="0" y1="0" y2="1"><stop offset="0" stop-color="#2ea84a"/><stop offset="1" stop-color="#0c6a22"/></linearGradient></defs>
<g transform="translate(-3,108)">
<path d="M444.5,32.6 L452.2,36.5 L452.2,48 L444.5,52 L436.9,48 L436.9,36.5 Z" fill="#3f62ad"/>
<path d="M444.5,32.6 L452.2,36.5 L444.5,40.5 L436.9,36.5 Z" fill="#4a6bb5"/>
<path d="M444.5,40.5 L452.2,36.5 L452.2,48 L444.5,52 Z" fill="#3357a0"/>
<path transform="translate(451,34)" d="M0,0 L8,0 Q13,0 13,5 L13,8 L15.5,8 L10.5,14 L5.5,8 L8,8 L8,6.5 Q8,4.5 5.5,4 Q3,3.3 0,1.5 Z" fill="url(#grn2)"/>
<g fill="#3e63b0"><rect x="453" y="48" width="4.8" height="15"/><rect x="448" y="53" width="19.4" height="5.6"/></g>
<rect x="458" y="53" width="4.5" height="5.6" fill="#e06a22"/>
</g></svg>

</body></html>
